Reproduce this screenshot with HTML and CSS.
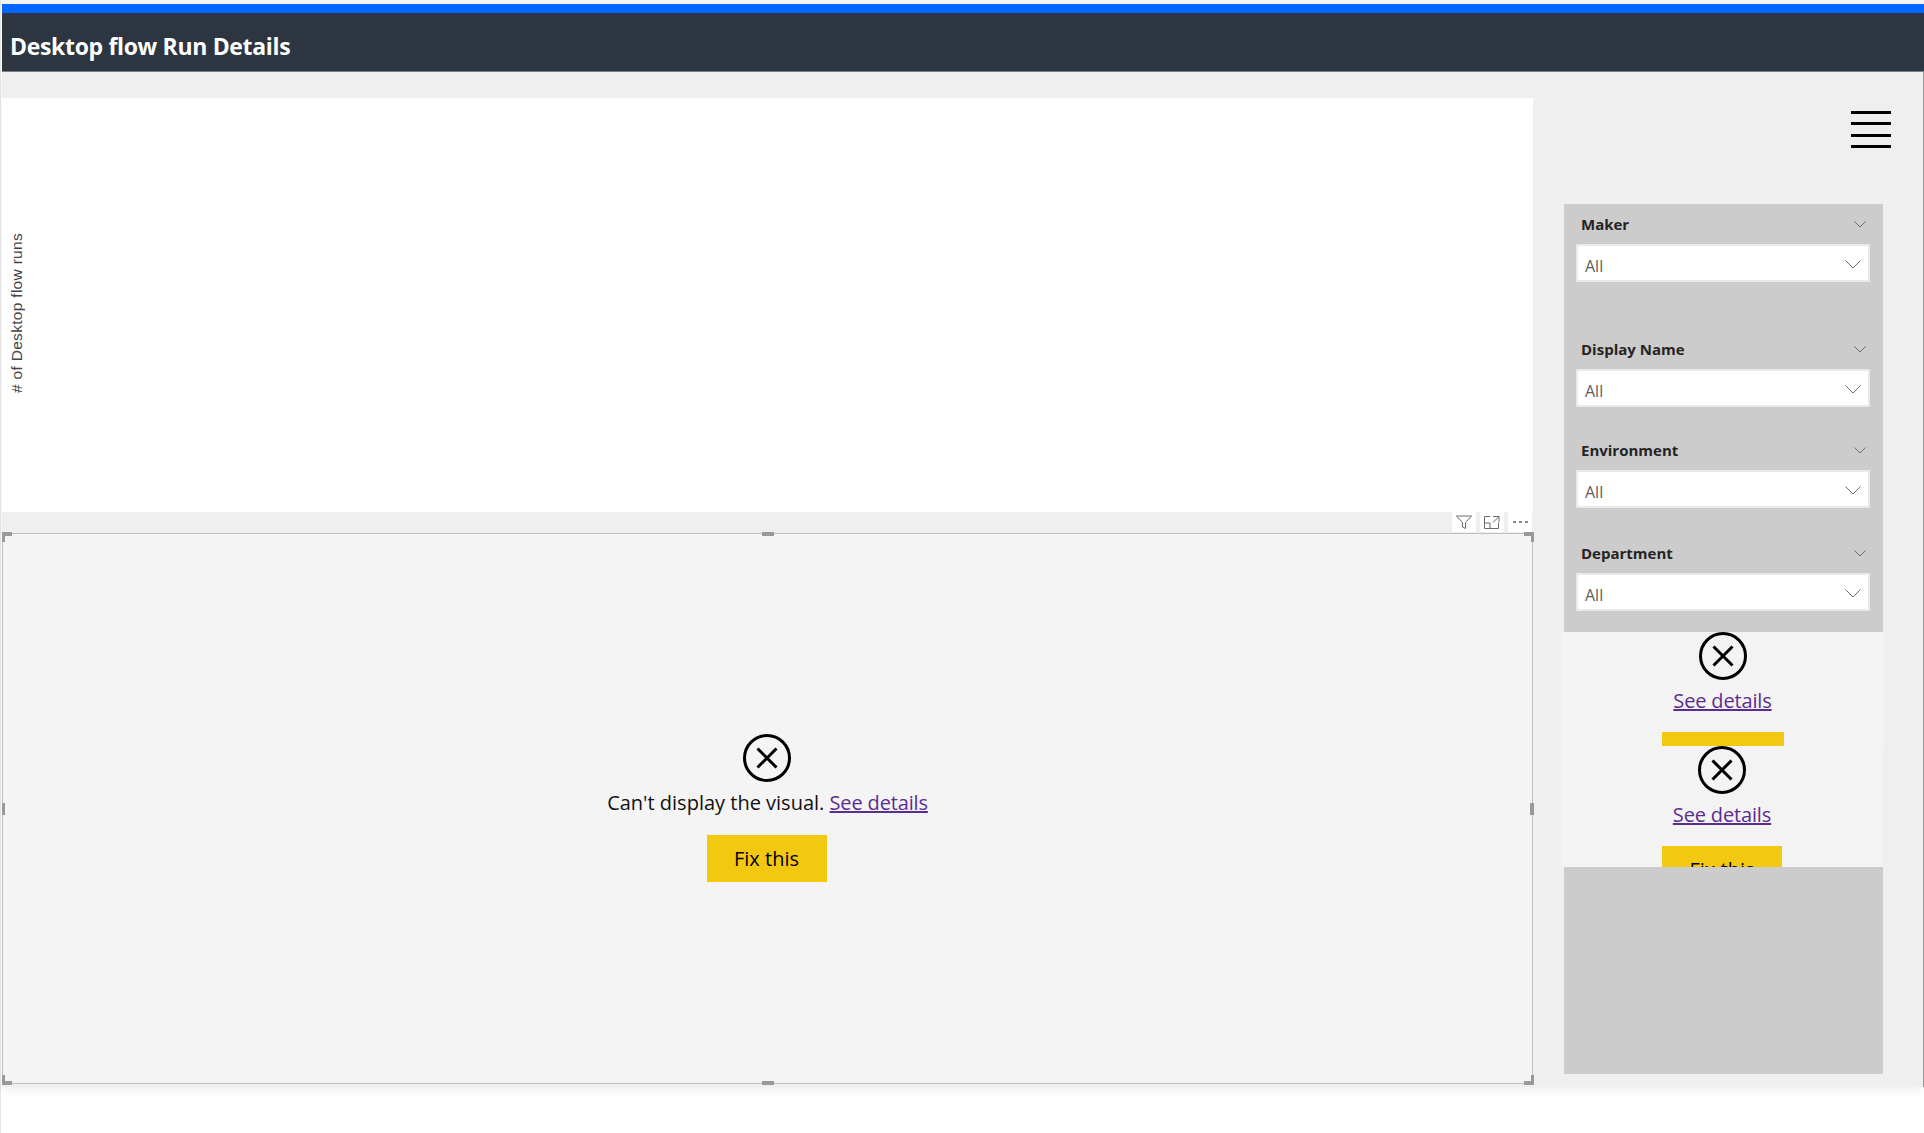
FILE: index.html
```html
<!DOCTYPE html>
<html lang="en">
<head>
<meta charset="utf-8">
<title>Desktop flow Run Details</title>
<link rel="stylesheet" href="styles.css">
</head>
<body>
<div class="page">
  <header class="titlebar"><h1 class="title">Desktop flow Run Details</h1></header>
  <main class="canvas">
    <section class="left">
      <div class="chart"><span class="axis"># of Desktop flow runs</span></div>
      <div class="toolbar">
        <span class="tool"><svg width="16" height="15" viewBox="0 0 16 15"><path class="ico" d="M.5 1h15L9.5 7.5v6l-3-1.5V7.5z"/></svg></span>
        <span class="tool"><svg width="16" height="13" viewBox="0 0 16 13"><path class="ico" d="M6 .5H.5v12h14V7M.5 7H6v5.5M9 .5h6v6M15 .5L9 6.500"/></svg></span>
        <span class="tool dots"><i></i><i></i><i></i></span>
      </div>
      <div class="visual">
        <span class="grip tl"></span><span class="grip tr"></span><span class="grip bl"></span><span class="grip br"></span>
        <span class="tab top"></span><span class="tab bottom"></span><span class="tab lft"></span><span class="tab rgt"></span>
        <svg class="err" width="48" height="48" viewBox="0 0 48 48"><circle class="ring" cx="24" cy="24" r="22.500"/><path class="ring" d="M14.500 14.500l19 19M33.500 14.500l-19 19"/></svg>
        <p class="msg">Can't display the visual. <a class="link" href="#">See details</a></p>
        <span class="fix">Fix this</span>
      </div>
    </section>
    <aside class="right">
      <div class="burger"><i></i><i></i><i></i><i></i></div>
      <div class="slicers">
        <div class="slicer s1">
          <div class="s-head"><b>Maker</b><svg class="c1" width="12" height="7" viewBox="0 0 12 7"><path class="ico" d="M.5.5L6 6l5.500-5.500"/></svg></div>
          <div class="s-box"><span>All</span><svg class="c2" width="16" height="9" viewBox="0 0 16 9"><path class="ico" d="M.5.5L8 8 15.500.5"/></svg></div>
        </div>
        <div class="slicer s2">
          <div class="s-head"><b>Display Name</b><svg class="c1" width="12" height="7" viewBox="0 0 12 7"><path class="ico" d="M.5.5L6 6l5.500-5.500"/></svg></div>
          <div class="s-box"><span>All</span><svg class="c2" width="16" height="9" viewBox="0 0 16 9"><path class="ico" d="M.5.5L8 8 15.500.5"/></svg></div>
        </div>
        <div class="slicer s3">
          <div class="s-head"><b>Environment</b><svg class="c1" width="12" height="7" viewBox="0 0 12 7"><path class="ico" d="M.5.5L6 6l5.500-5.500"/></svg></div>
          <div class="s-box"><span>All</span><svg class="c2" width="16" height="9" viewBox="0 0 16 9"><path class="ico" d="M.5.5L8 8 15.500.5"/></svg></div>
        </div>
        <div class="slicer s4">
          <div class="s-head"><b>Department</b><svg class="c1" width="12" height="7" viewBox="0 0 12 7"><path class="ico" d="M.5.5L6 6l5.500-5.500"/></svg></div>
          <div class="s-box"><span>All</span><svg class="c2" width="16" height="9" viewBox="0 0 16 9"><path class="ico" d="M.5.5L8 8 15.500.5"/></svg></div>
        </div>
      </div>
      <div class="mini mini-a">
        <svg class="err" width="48" height="48" viewBox="0 0 48 48"><circle class="ring" cx="24" cy="24" r="22.500"/><path class="ring" d="M14.500 14.500l19 19M33.500 14.500l-19 19"/></svg>
        <a class="link" href="#">See details</a>
        <span class="fix">Fix this</span>
      </div>
      <div class="mini mini-b">
        <svg class="err" width="48" height="48" viewBox="0 0 48 48"><circle class="ring" cx="24" cy="24" r="22.500"/><path class="ring" d="M14.500 14.500l19 19M33.500 14.500l-19 19"/></svg>
        <a class="link" href="#">See details</a>
        <span class="fix">Fix this</span>
      </div>
      <div class="blank"></div>
    </aside>
  </main>
</div>
</body>
</html>
```
FILE: styles.css
```css
* { box-sizing: border-box; }
html, body { margin: 0; height: 100%; background: #fff; overflow: hidden; }
body { font-family: "Open Sans", "Noto Sans", sans-serif; color: #000; }
.page { height: 1133px; padding-left: 2px; padding-top: 4px; border-left: 1px solid #e6e6e6; background: linear-gradient(#f3f3f3 4px, #fff 4px); }
.titlebar { height: 68px; margin-left: -1px; background: #2d3640; border-top: 9px solid #0066ff; border-bottom: 1px solid #7c8289; display: flex; align-items: center; padding: 7px 0 0 8px; }
.title { margin: 0; font-size: 23px; font-weight: 700; color: #fff; line-height: 30px; letter-spacing: -.33px; }
.canvas { height: 1015px; margin-left: -1px; background: #efefef; display: flex; box-shadow: 0 4px 8px rgba(0,0,0,.06); border-right: 1px solid #999; }
.left { width: 1531px; padding-top: 26px; flex: none; }
.chart { height: 414px; background: #fff; display: flex; align-items: center; }
.axis { writing-mode: vertical-rl; transform: rotate(180deg); font-family: "Liberation Sans", sans-serif; font-size: 15.500px; letter-spacing: .3px; color: #444; margin: 15px 0 0 6px; }
.toolbar { height: 21px; display: flex; justify-content: flex-end; gap: 4px; padding-right: 1px; }
.tool { width: 24px; height: 20px; background: #fff; display: flex; align-items: center; justify-content: center; }
.tool.dots { gap: 3px; }
.tool.dots i { width: 3px; height: 2px; background: #8a86a0; }
.ico { fill: none; stroke: #6b6b6b; stroke-width: 1; }
.visual { position: relative; height: 551px; background: #f4f4f4; border: 1px solid #bfbfbf; display: flex; flex-direction: column; align-items: center; padding-top: 200px; }
.visual > .err, .visual > .fix { margin-right: 2px; }
.grip, .tab { position: absolute; background: #999; }
.grip { width: 10px; height: 10px; clip-path: polygon(0 0, 100% 0, 100% 40%, 30% 40%, 30% 100%, 0 100%); }
.grip.tl { left: -1px; top: -2px; }
.grip.tr { right: -2px; top: -2px; transform: scaleX(-1); }
.grip.bl { left: -1px; bottom: -2px; transform: scaleY(-1); }
.grip.br { right: -2px; bottom: -2px; transform: scale(-1); }
.tab.top { left: 759px; top: -2px; width: 12px; height: 4px; }
.tab.bottom { left: 759px; bottom: -2px; width: 12px; height: 4px; }
.tab.lft { left: -1px; top: 269px; width: 3px; height: 12px; }
.tab.rgt { right: -2px; top: 269px; width: 4px; height: 12px; }
.err { display: block; flex: none; }
.ring { fill: none; stroke: #000; stroke-width: 3; }
.msg { margin: 4px 0 0; font-size: 20px; line-height: 34px; color: #111; }
.link { color: #5c2d91; text-decoration: underline; letter-spacing: -.15px; }
.fix { display: flex; align-items: center; justify-content: center; background: #f2c811; font-size: 20px; color: #000; width: 120px; height: 47px; flex: none; }
.msg + .fix { margin-top: 15px; }
.right { width: 390px; flex: none; padding-left: 31px; }
.burger { width: 40px; margin: 39px 0 0 287px; height: 93px; display: flex; flex-direction: column; gap: 8.330px; }
.burger i { display: block; height: 3px; background: #000; }
.slicers { width: 319px; height: 428px; background: #cccccc; padding: 0 13px 0 12px; }
.s-head { height: 40px; display: flex; align-items: center; justify-content: space-between; padding: 0 4px 0 5px; font-size: 15px; color: #252423; }
.s-head b { font-weight: 700; }
.s-box { height: 38px; background: #fff; border: 2px solid #e9e9e9; display: flex; justify-content: space-between; align-items: center; padding: 5px 7px 0 7px; font-size: 16px; color: #605e5c; }
.s-box .c2 { margin-top: -2px; }
.s2 { margin-top: 47px; }
.s3 { margin-top: 23px; }
.s4 { margin-top: 25px; }
.mini { background: #f3f3f3; overflow: hidden; margin-left: -3px; display: flex; flex-direction: column; align-items: center; }
.mini-a { height: 114px; width: 323px; }
.mini-a .fix { width: 122px; }
.mini-b { height: 121px; width: 322px; }
.mini .link { font-size: 20px; line-height: 34px; margin-top: 4px; }
.mini .fix { margin-top: 14px; }
.blank { width: 319px; height: 207px; background: #cccccc; }
```
